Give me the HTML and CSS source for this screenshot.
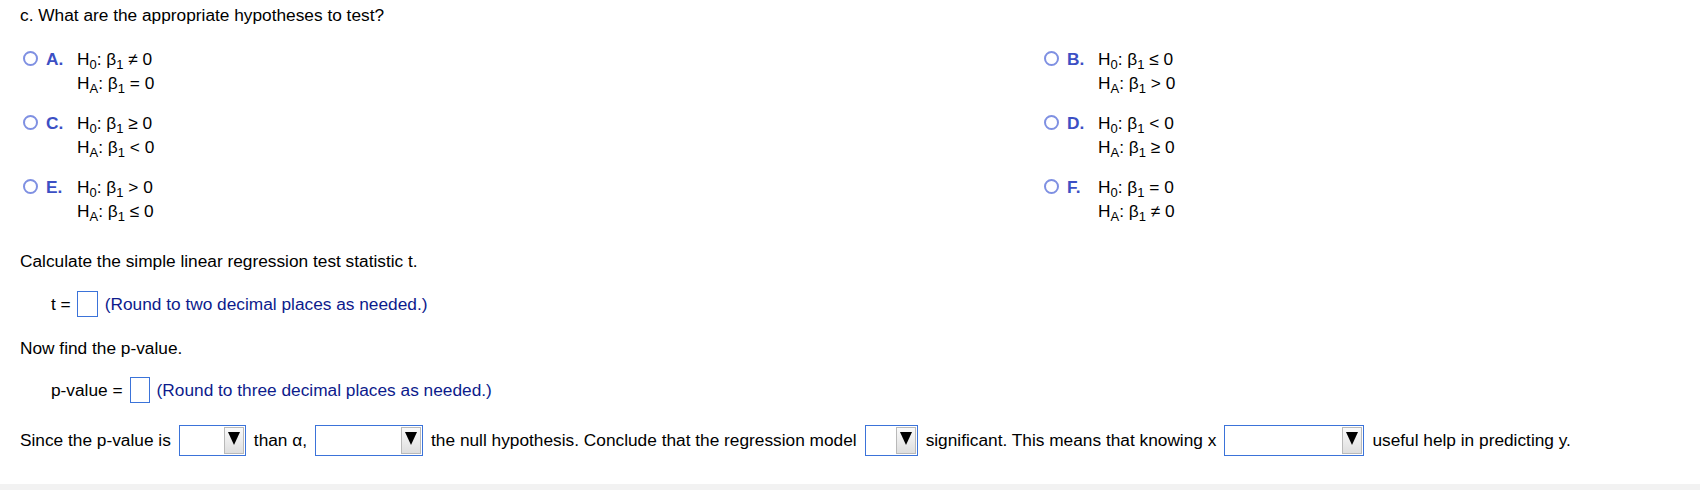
FILE: index.html
```html
<!DOCTYPE html>
<html lang="en">
<head>
<meta charset="utf-8">
<title>Hypotheses</title>
<link rel="stylesheet" href="styles.css">
</head>
<body>
<div class="page">
  <p class="question">c. What are the appropriate hypotheses to test?</p>

  <div class="options">
    <div class="opt">
      <span class="radio"></span><span class="letter">A.</span>
      <div class="hyp">
        <div class="line">H<span class="sub">0</span>: β<span class="sub">1</span> ≠ 0</div>
        <div class="line">H<span class="sub">A</span>: β<span class="sub">1</span> = 0</div>
      </div>
    </div>
    <div class="opt">
      <span class="radio"></span><span class="letter">B.</span>
      <div class="hyp">
        <div class="line">H<span class="sub">0</span>: β<span class="sub">1</span> ≤ 0</div>
        <div class="line">H<span class="sub">A</span>: β<span class="sub">1</span> &gt; 0</div>
      </div>
    </div>
    <div class="opt">
      <span class="radio"></span><span class="letter">C.</span>
      <div class="hyp">
        <div class="line">H<span class="sub">0</span>: β<span class="sub">1</span> ≥ 0</div>
        <div class="line">H<span class="sub">A</span>: β<span class="sub">1</span> &lt; 0</div>
      </div>
    </div>
    <div class="opt">
      <span class="radio"></span><span class="letter">D.</span>
      <div class="hyp">
        <div class="line">H<span class="sub">0</span>: β<span class="sub">1</span> &lt; 0</div>
        <div class="line">H<span class="sub">A</span>: β<span class="sub">1</span> ≥ 0</div>
      </div>
    </div>
    <div class="opt">
      <span class="radio"></span><span class="letter">E.</span>
      <div class="hyp">
        <div class="line">H<span class="sub">0</span>: β<span class="sub">1</span> &gt; 0</div>
        <div class="line">H<span class="sub">A</span>: β<span class="sub">1</span> ≤ 0</div>
      </div>
    </div>
    <div class="opt">
      <span class="radio"></span><span class="letter">F.</span>
      <div class="hyp">
        <div class="line">H<span class="sub">0</span>: β<span class="sub">1</span> = 0</div>
        <div class="line">H<span class="sub">A</span>: β<span class="sub">1</span> ≠ 0</div>
      </div>
    </div>
  </div>

  <p class="calc">Calculate the simple linear regression test statistic t.</p>

  <div class="answer-row t-row">
    <span>t =</span>
    <span class="box"></span>
    <span class="hint">(Round to two decimal places as needed.)</span>
  </div>

  <p class="now">Now find the p-value.</p>

  <div class="answer-row p-row">
    <span>p-value =</span>
    <span class="box"></span>
    <span class="hint">(Round to three decimal places as needed.)</span>
  </div>

  <div class="since">
    <span>Since the p-value is</span>
    <span class="select w1"><span class="btn"><svg width="12" height="13" viewBox="0 0 12 13"><path d="M0 0H12L6 13Z" fill="#000"/></svg></span></span>
    <span>than α,</span>
    <span class="select w2"><span class="btn"><svg width="12" height="13" viewBox="0 0 12 13"><path d="M0 0H12L6 13Z" fill="#000"/></svg></span></span>
    <span>the null hypothesis. Conclude that the regression model</span>
    <span class="select w3"><span class="btn"><svg width="12" height="13" viewBox="0 0 12 13"><path d="M0 0H12L6 13Z" fill="#000"/></svg></span></span>
    <span>significant. This means that knowing x</span>
    <span class="select w4"><span class="btn"><svg width="12" height="13" viewBox="0 0 12 13"><path d="M0 0H12L6 13Z" fill="#000"/></svg></span></span>
    <span>useful help in predicting y.</span>
  </div>
</div>
<div class="footer"></div>
</body>
</html>
```

FILE: styles.css
```css
html, body {
  margin: 0;
  padding: 0;
  background: #ffffff;
}

body {
  font-family: "Liberation Sans", Arial, sans-serif;
  font-size: 17.3px;
  color: #000;
  width: 1700px;
  height: 490px;
  overflow: hidden;
}

.page {
  padding: 5px 0 0 20px;
  height: 479px;
  box-sizing: border-box;
}

.question {
  margin: 0;
  line-height: 20px;
}

.options {
  display: grid;
  grid-template-columns: 1021px auto;
  row-gap: 16px;
  margin-top: 22px;
  padding-left: 3px;
}

.opt {
  display: flex;
  align-items: flex-start;
}

.radio {
  width: 15px;
  height: 15px;
  box-sizing: border-box;
  border: 2px solid #7f90e2;
  border-radius: 50%;
  margin-top: 4px;
  flex: none;
}

.letter {
  width: 31px;
  margin-left: 8px;
  font-weight: bold;
  color: #3c4fc4;
  line-height: 24px;
  flex: none;
}

.hyp .line {
  line-height: 24px;
  height: 24px;
  white-space: nowrap;
}

.sub {
  font-size: 13px;
  vertical-align: -4px;
  line-height: 0;
}

.calc {
  margin: 28px 0 0 0;
  line-height: 20px;
}

.now {
  margin: 21px 0 0 0;
  line-height: 20px;
}

.answer-row {
  display: flex;
  align-items: center;
  height: 26px;
  padding-left: 31px;
  white-space: nowrap;
}

.t-row {
  margin-top: 20px;
}

.p-row {
  margin-top: 19px;
}

.box {
  width: 21px;
  height: 26px;
  box-sizing: border-box;
  border: 1px solid #3b73d9;
  margin: 0 7px 0 6px;
  flex: none;
}

.p-row .box {
  width: 20px;
  margin-left: 7px;
}

.hint {
  color: #0d1b8c;
}

.since {
  display: flex;
  align-items: center;
  height: 31px;
  margin-top: 22px;
  white-space: nowrap;
  gap: 8px;
}

.select {
  height: 31px;
  box-sizing: border-box;
  border: 1px solid #3b73d9;
  display: flex;
  justify-content: flex-end;
  align-items: center;
  padding: 1px;
  flex: none;
}

.w1 { width: 67px; }
.w2 { width: 108px; }
.w3 { width: 53px; }
.w4 { width: 140px; }

.btn {
  width: 20px;
  height: 27px;
  box-sizing: border-box;
  border: 1px solid #b9b9b9;
  background: linear-gradient(#fafafa, #dedede);
  display: flex;
  align-items: flex-start;
  justify-content: center;
  padding-top: 4px;
}

.footer {
  height: 11px;
  background: #f2f2f2;
  margin-top: 5px;
}
```
